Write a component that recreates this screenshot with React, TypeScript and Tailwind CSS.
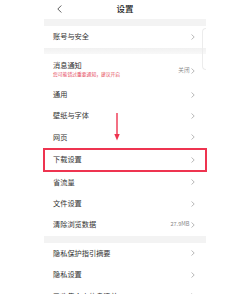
import React from 'react';

const font = { fontFamily: '"Noto Sans CJK SC", "Noto Sans", sans-serif' };

function Chevron() {
  return (
    <svg width="4" height="6" viewBox="0 0 4 6" className="shrink-0">
      <polyline points="0.5,0.5 3.2,3 0.5,5.5" fill="none" stroke="#a8a8a8" strokeWidth="0.8" />
    </svg>
  );
}

function Row({ label, value }: { label: string; value?: string }) {
  return (
    <div className="h-[21.4px] flex items-center justify-between pl-[9px] pr-[11px] bg-white">
      <span className="text-[7.2px] text-[#333333] leading-none">{label}</span>
      <div className="flex items-center gap-[1.5px]">
        {value && <span className="text-[5.6px] text-[#8a8a8a] leading-none">{value}</span>}
        <Chevron />
      </div>
    </div>
  );
}

function Gap() {
  return <div className="h-[7px] bg-[#f3f3f3]" />;
}

export default function App() {
  return (
    <div className="w-[250px] h-[294px] bg-white overflow-hidden" style={font}>
      <div className="ml-[44px] w-[162px] relative">
        <div className="h-[19px] relative flex items-center justify-center">
          <svg width="5" height="8" viewBox="0 0 5 8" className="absolute left-[13px] top-[5px]">
            <polyline points="4.3,0.5 0.8,4 4.3,7.5" fill="none" stroke="#333" strokeWidth="0.8" />
          </svg>
          <span className="text-[8.5px] text-[#222] font-medium leading-none -mt-[3px]">设置</span>
        </div>
        <Gap />
        <div className="h-[22px] flex items-center justify-between pl-[9px] pr-[11px]">
          <span className="text-[7.2px] text-[#333] leading-none">账号与安全</span>
          <Chevron />
        </div>
        <div className="h-[6px] bg-gradient-to-b from-[#f1f1f1] to-[#f8f8f8]" />
        <div className="h-[30px] flex items-center justify-between pl-[9px] pr-[11px]">
          <div className="flex flex-col gap-[3px]">
            <span className="text-[7.2px] text-[#333] leading-none">消息通知</span>
            <span className="text-[4.8px] text-[#e5475a] leading-none">您可能错过重要通知，建议开启</span>
          </div>
          <div className="flex items-center gap-[1.5px] mt-[3px]">
            <span className="text-[5.6px] text-[#8a8a8a] leading-none">关闭</span>
            <Chevron />
          </div>
        </div>
        <Row label="通用" />
        <Row label="壁纸与字体" />
        <Row label="网页" />
        <div className="-mx-[1px] border-2 border-[#ee3450]">
          <div className="h-[19.4px] flex items-center justify-between pl-[8px] pr-[10px]">
            <span className="text-[7.2px] text-[#333] leading-none">下载设置</span>
            <Chevron />
          </div>
        </div>
        <Row label="省流量" />
        <Row label="文件设置" />
        <Row label="清除浏览数据" value="27.9MB" />
        <Gap />
        <Row label="隐私保护指引摘要" />
        <Row label="隐私设置" />
        <Row label="已收集个人信息清单" />

        <div className="absolute left-[158px] top-[28px] w-[4px] h-[42px] rounded-l-[4px] border border-r-0 border-[#ececec]" />
        <svg width="6" height="28" viewBox="0 0 6 28" className="absolute left-[70px] top-[113px]">
          <line x1="3" y1="0" x2="3" y2="22" stroke="#ee3450" strokeWidth="1.4" />
          <polygon points="0.3,21 5.7,21 3,27.5" fill="#ee3450" />
        </svg>
      </div>
    </div>
  );
}
